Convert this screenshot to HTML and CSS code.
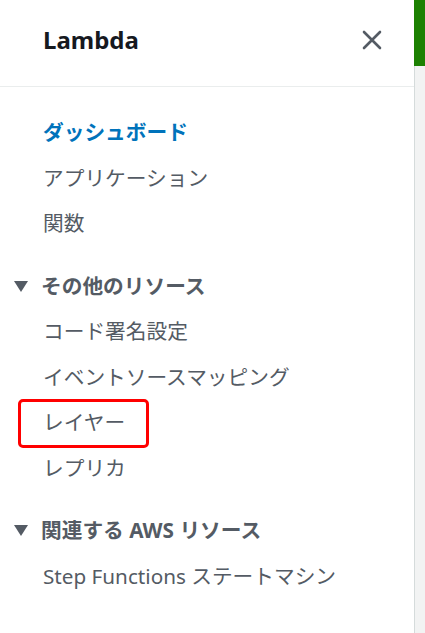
FILE: index.html
```html
<!DOCTYPE html>
<html lang="ja">
  <head>
    <meta charset="UTF-8" />
    <meta name="viewport" content="width=device-width, initial-scale=1.0" />
    <title>Lambda</title>
    <link rel="stylesheet" href="styles.css">
  </head>
  <body>
    <div class="page">
      <!-- サイドナビ -->
      <nav class="side-nav">
        <div class="nav-header">
          <h1 class="nav-title">Lambda</h1>
          <button class="close-btn" aria-label="閉じる">
            <svg width="20" height="20" viewBox="0 0 20 20">
              <path d="M2 2 L18 18 M18 2 L2 18" stroke="#545b64" stroke-width="2.6" stroke-linecap="round" fill="none"/>
            </svg>
          </button>
        </div>

        <ul class="nav-list">
          <li><a class="nav-link active" href="#">ダッシュボード</a></li>
          <li><a class="nav-link" href="#">アプリケーション</a></li>
          <li><a class="nav-link" href="#">関数</a></li>
        </ul>

        <div class="nav-section">
          <h2 class="section-title"><span class="caret"></span>その他のリソース</h2>
          <ul class="nav-list">
            <li><a class="nav-link" href="#">コード署名設定</a></li>
            <li><a class="nav-link" href="#">イベントソースマッピング</a></li>
            <li><a class="nav-link highlight" href="#">レイヤー</a></li>
            <li><a class="nav-link" href="#">レプリカ</a></li>
          </ul>
        </div>

        <div class="nav-section">
          <h2 class="section-title"><span class="caret"></span>関連する AWS リソース</h2>
          <ul class="nav-list">
            <li><a class="nav-link" href="#">Step Functions ステートマシン</a></li>
          </ul>
        </div>
      </nav>

      <!-- メイン側 -->
      <div class="main">
        <div class="main-top"></div>
        <div class="main-body"></div>
      </div>
    </div>
  </body>
</html>
```

FILE: styles.css
```css
body {
  margin: 0;
  font-family: "Noto Sans", "Noto Sans CJK JP", sans-serif;
  color: #545b64;
  background: #ffffff;
}

.page {
  display: flex;
  height: 633px;
  overflow: hidden;
}

/* サイドナビ */
.side-nav {
  width: 414px;
  flex-shrink: 0;
  background: #ffffff;
}

.nav-header {
  height: 87px;
  display: flex;
  align-items: center;
  justify-content: space-between;
  padding: 0 32px 6px 43px;
  box-sizing: border-box;
  border-bottom: 1px solid #eaeded;
}

.nav-title {
  margin: 0;
  font-size: 24px;
  font-weight: 700;
  color: #16191f;
  line-height: 30px;
}

.close-btn {
  border: none;
  background: none;
  padding: 0;
  width: 20px;
  height: 20px;
  cursor: pointer;
}

.close-btn svg {
  display: block;
}

.nav-list {
  list-style: none;
  margin: 0;
  padding: 0;
}

.side-nav > .nav-list {
  padding-top: 23px;
}

.nav-link {
  display: inline-block;
  position: relative;
  padding-left: 43px;
  font-size: 20.7px;
  line-height: 45.5px;
  color: #545b64;
  text-decoration: none;
}

.nav-link.active {
  color: #0073bb;
  font-weight: 700;
}

/* 赤枠の注釈 */
.nav-link.highlight:after {
  content: "";
  position: absolute;
  left: 18px;
  top: -1px;
  width: 125px;
  height: 43px;
  border: 3px solid #ff0000;
  border-radius: 5px;
}

.nav-section {
  margin-top: 17px;
}

.section-title {
  display: flex;
  align-items: center;
  margin: 0;
  padding-left: 14px;
  font-size: 20.7px;
  font-weight: 700;
  line-height: 45.5px;
  color: #545b64;
}

.caret {
  width: 0;
  height: 0;
  border-left: 7px solid transparent;
  border-right: 7px solid transparent;
  border-top: 11px solid #545b64;
  margin-right: 13px;
}

/* 右側 */
.main {
  flex: 1;
  display: flex;
  flex-direction: column;
}

.main-top {
  height: 66px;
  background: #1d8102;
}

.main-body {
  flex: 1;
  background: #f2f3f3;
  border-left: 1px solid #d5dbdb;
}
```
